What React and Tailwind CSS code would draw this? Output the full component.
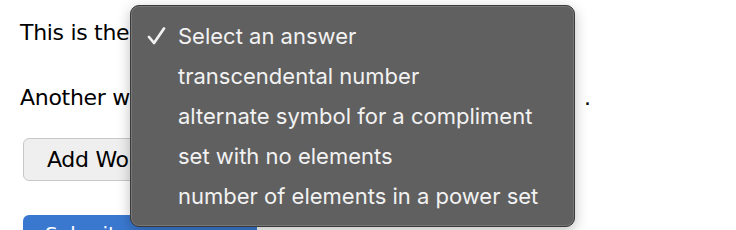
import React from 'react';

const options = [
  'Select an answer',
  'transcendental number',
  'alternate symbol for a compliment',
  'set with no elements',
  'number of elements in a power set',
];

const App = () => {
  return (
    <div className="relative w-[736px] h-[230px] overflow-hidden bg-white text-black" style={{ fontFamily: '"DejaVu Sans", sans-serif' }}>
      <div className="px-5 pt-[20px]">
        <p className="text-[22px] leading-[26px] tracking-[-0.3px]">
          This is the <span className="inline-block w-[300px]" /> blank.
        </p>
        <p className="mt-[39px] text-[22px] leading-[26px] tracking-[-0.3px] flex">
          <span>Another word</span>
          <span className="inline-block w-[419px]" />
          <span>.</span>
        </p>
        <button className="mt-[27px] ml-[3px] h-[43px] px-[23px] rounded-[6px] border border-[#c8c8c8] bg-[#efefef] text-[22px] leading-[26px] tracking-[-0.3px]">
          Add Word Bank
        </button>
        <div className="mt-[34px] ml-[3px] w-[234px] h-[40px] rounded-[6px] bg-[#3a78d0] text-white text-[20px] pt-[4px] px-[22px]">
          Submit
        </div>
      </div>

      {/* native select menu */}
      <div
        className="absolute left-[130px] top-[5px] w-[445px] h-[222px] rounded-[9px] border border-[#3a3a3a] bg-[#606060] shadow-[0_4px_14px_rgba(0,0,0,0.25),inset_0_0_0_1px_rgba(255,255,255,0.15)] pt-[10px]"
        style={{ fontFamily: 'Inter, "Noto Sans", sans-serif' }}
      >
        {options.map((o, i) => (
          <div key={o} className="flex items-center h-[40px] text-[22px] text-[#f2f2f2]">
            <span className="w-[47px] flex justify-end pr-[12px]">
              {i === 0 && (
                <svg width="19" height="18" viewBox="0 0 19 18" fill="none" stroke="#f2f2f2" strokeWidth="2.7" strokeLinecap="round" strokeLinejoin="round">
                  <path d="M2 10 L7 16 L17 1.5" />
                </svg>
              )}
            </span>
            <span>{o}</span>
          </div>
        ))}
      </div>
    </div>
  );
};

export default App;
